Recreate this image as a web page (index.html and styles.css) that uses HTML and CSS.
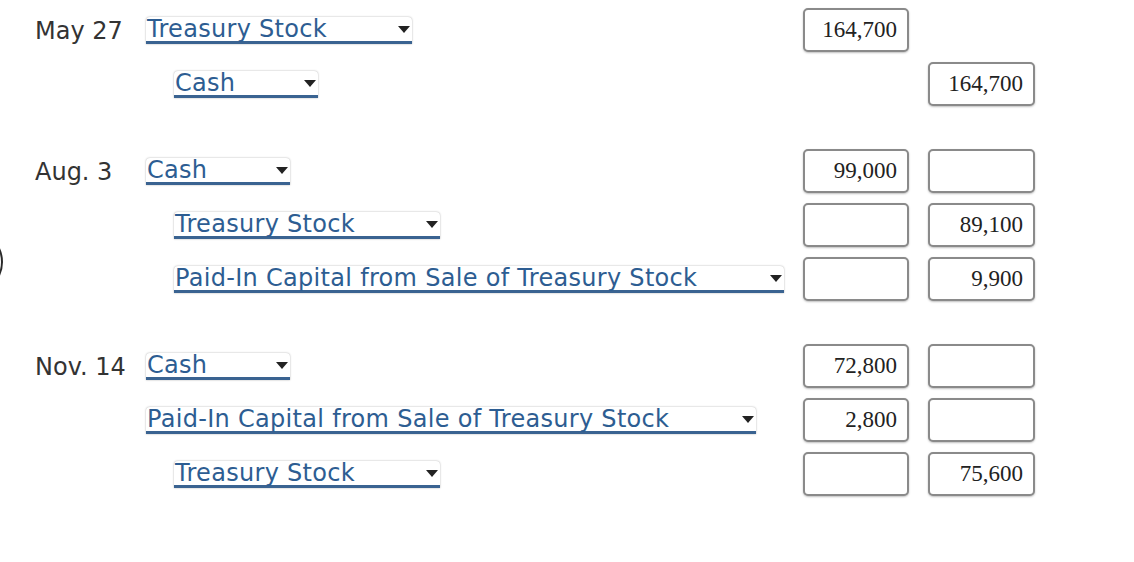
FILE: index.html
```html
<!DOCTYPE html>
<html>
<head>
<meta charset="utf-8">
<link rel="stylesheet" href="styles.css">
</head>
<body>
<div class="edge-mark"></div>
<div class="journal">
  <div class="group">
    <div class="row">
      <div class="date">May 27</div>
      <div class="acct-cell"><div class="acct w-ts"><span class="lbl">Treasury Stock</span><span class="arrow"></span></div></div>
      <div class="amt">164,700</div>
      <div class="blank"></div>
    </div>
    <div class="row">
      <div class="date"></div>
      <div class="acct-cell indent"><div class="acct w-cash"><span class="lbl">Cash</span><span class="arrow"></span></div></div>
      <div class="blank"></div>
      <div class="amt">164,700</div>
    </div>
  </div>

  <div class="group">
    <div class="row">
      <div class="date">Aug. 3</div>
      <div class="acct-cell"><div class="acct w-cash"><span class="lbl">Cash</span><span class="arrow"></span></div></div>
      <div class="amt">99,000</div>
      <div class="amt"></div>
    </div>
    <div class="row">
      <div class="date"></div>
      <div class="acct-cell indent"><div class="acct w-ts"><span class="lbl">Treasury Stock</span><span class="arrow"></span></div></div>
      <div class="amt"></div>
      <div class="amt">89,100</div>
    </div>
    <div class="row">
      <div class="date"></div>
      <div class="acct-cell indent"><div class="acct w-pic"><span class="lbl">Paid-In Capital from Sale of Treasury Stock</span><span class="arrow"></span></div></div>
      <div class="amt"></div>
      <div class="amt">9,900</div>
    </div>
  </div>

  <div class="group">
    <div class="row">
      <div class="date">Nov. 14</div>
      <div class="acct-cell"><div class="acct w-cash"><span class="lbl">Cash</span><span class="arrow"></span></div></div>
      <div class="amt">72,800</div>
      <div class="amt"></div>
    </div>
    <div class="row">
      <div class="date"></div>
      <div class="acct-cell"><div class="acct w-pic"><span class="lbl">Paid-In Capital from Sale of Treasury Stock</span><span class="arrow"></span></div></div>
      <div class="amt">2,800</div>
      <div class="amt"></div>
    </div>
    <div class="row">
      <div class="date"></div>
      <div class="acct-cell indent"><div class="acct w-ts"><span class="lbl">Treasury Stock</span><span class="arrow"></span></div></div>
      <div class="amt"></div>
      <div class="amt">75,600</div>
    </div>
  </div>
</div>
</body>
</html>
```

FILE: styles.css
```css
html, body {
  margin: 0;
  padding: 0;
  background: #ffffff;
  overflow: hidden;
}

body {
  width: 1134px;
  height: 562px;
  position: relative;
  font-family: "DejaVu Sans", Verdana, sans-serif;
}

.edge-mark {
  position: absolute;
  left: -61px;
  top: 230px;
  width: 64px;
  height: 64px;
  box-sizing: border-box;
  border: 2.5px solid #2a2a2a;
  border-radius: 50%;
}

.journal {
  padding: 3px 0 0 35px;
  display: flex;
  flex-direction: column;
  gap: 33px;
}

.group {
  display: flex;
  flex-direction: column;
}

.row {
  display: grid;
  grid-template-columns: 111px 657px 125px 107px;
  height: 54px;
  align-items: center;
}

.date {
  font-size: 24px;
  color: #333333;
  line-height: 54px;
  padding-top: 1px;
  height: 54px;
  box-sizing: border-box;
  white-space: nowrap;
}

.acct-cell {
  display: flex;
}

.acct-cell.indent {
  padding-left: 28px;
}

.acct {
  height: 27px;
  box-sizing: border-box;
  border-bottom: 3px solid #3a6391;
  background: #ffffff;
  border-radius: 4px 4px 0 0;
  box-shadow: 0 0 2px rgba(0, 0, 0, 0.35);
  display: flex;
  align-items: center;
  justify-content: space-between;
  padding: 0 2px 0 1px;
}

.w-ts { width: 266px; }
.w-cash { width: 144px; }
.w-pic { width: 610px; }

.lbl {
  font-size: 24px;
  letter-spacing: 0.3px;
  line-height: 24px;
  color: #2d5d92;
  white-space: nowrap;
}

.arrow {
  width: 0;
  height: 0;
  border-left: 6px solid transparent;
  border-right: 6px solid transparent;
  border-top: 7px solid #222222;
  margin-top: 1px;
}

.amt {
  width: 106px;
  height: 44px;
  box-sizing: border-box;
  border: 2px solid #8a8a8a;
  border-radius: 5px;
  box-shadow: 0 1px 2px rgba(0, 0, 0, 0.25);
  font-family: "Liberation Serif", "Times New Roman", serif;
  font-size: 23px;
  color: #222222;
  text-align: right;
  line-height: 36px;
  padding: 2px 10px 2px 0;
  background: #ffffff;
}

.row > .amt:last-child {
  width: 107px;
}

.blank {
  height: 44px;
}
```
